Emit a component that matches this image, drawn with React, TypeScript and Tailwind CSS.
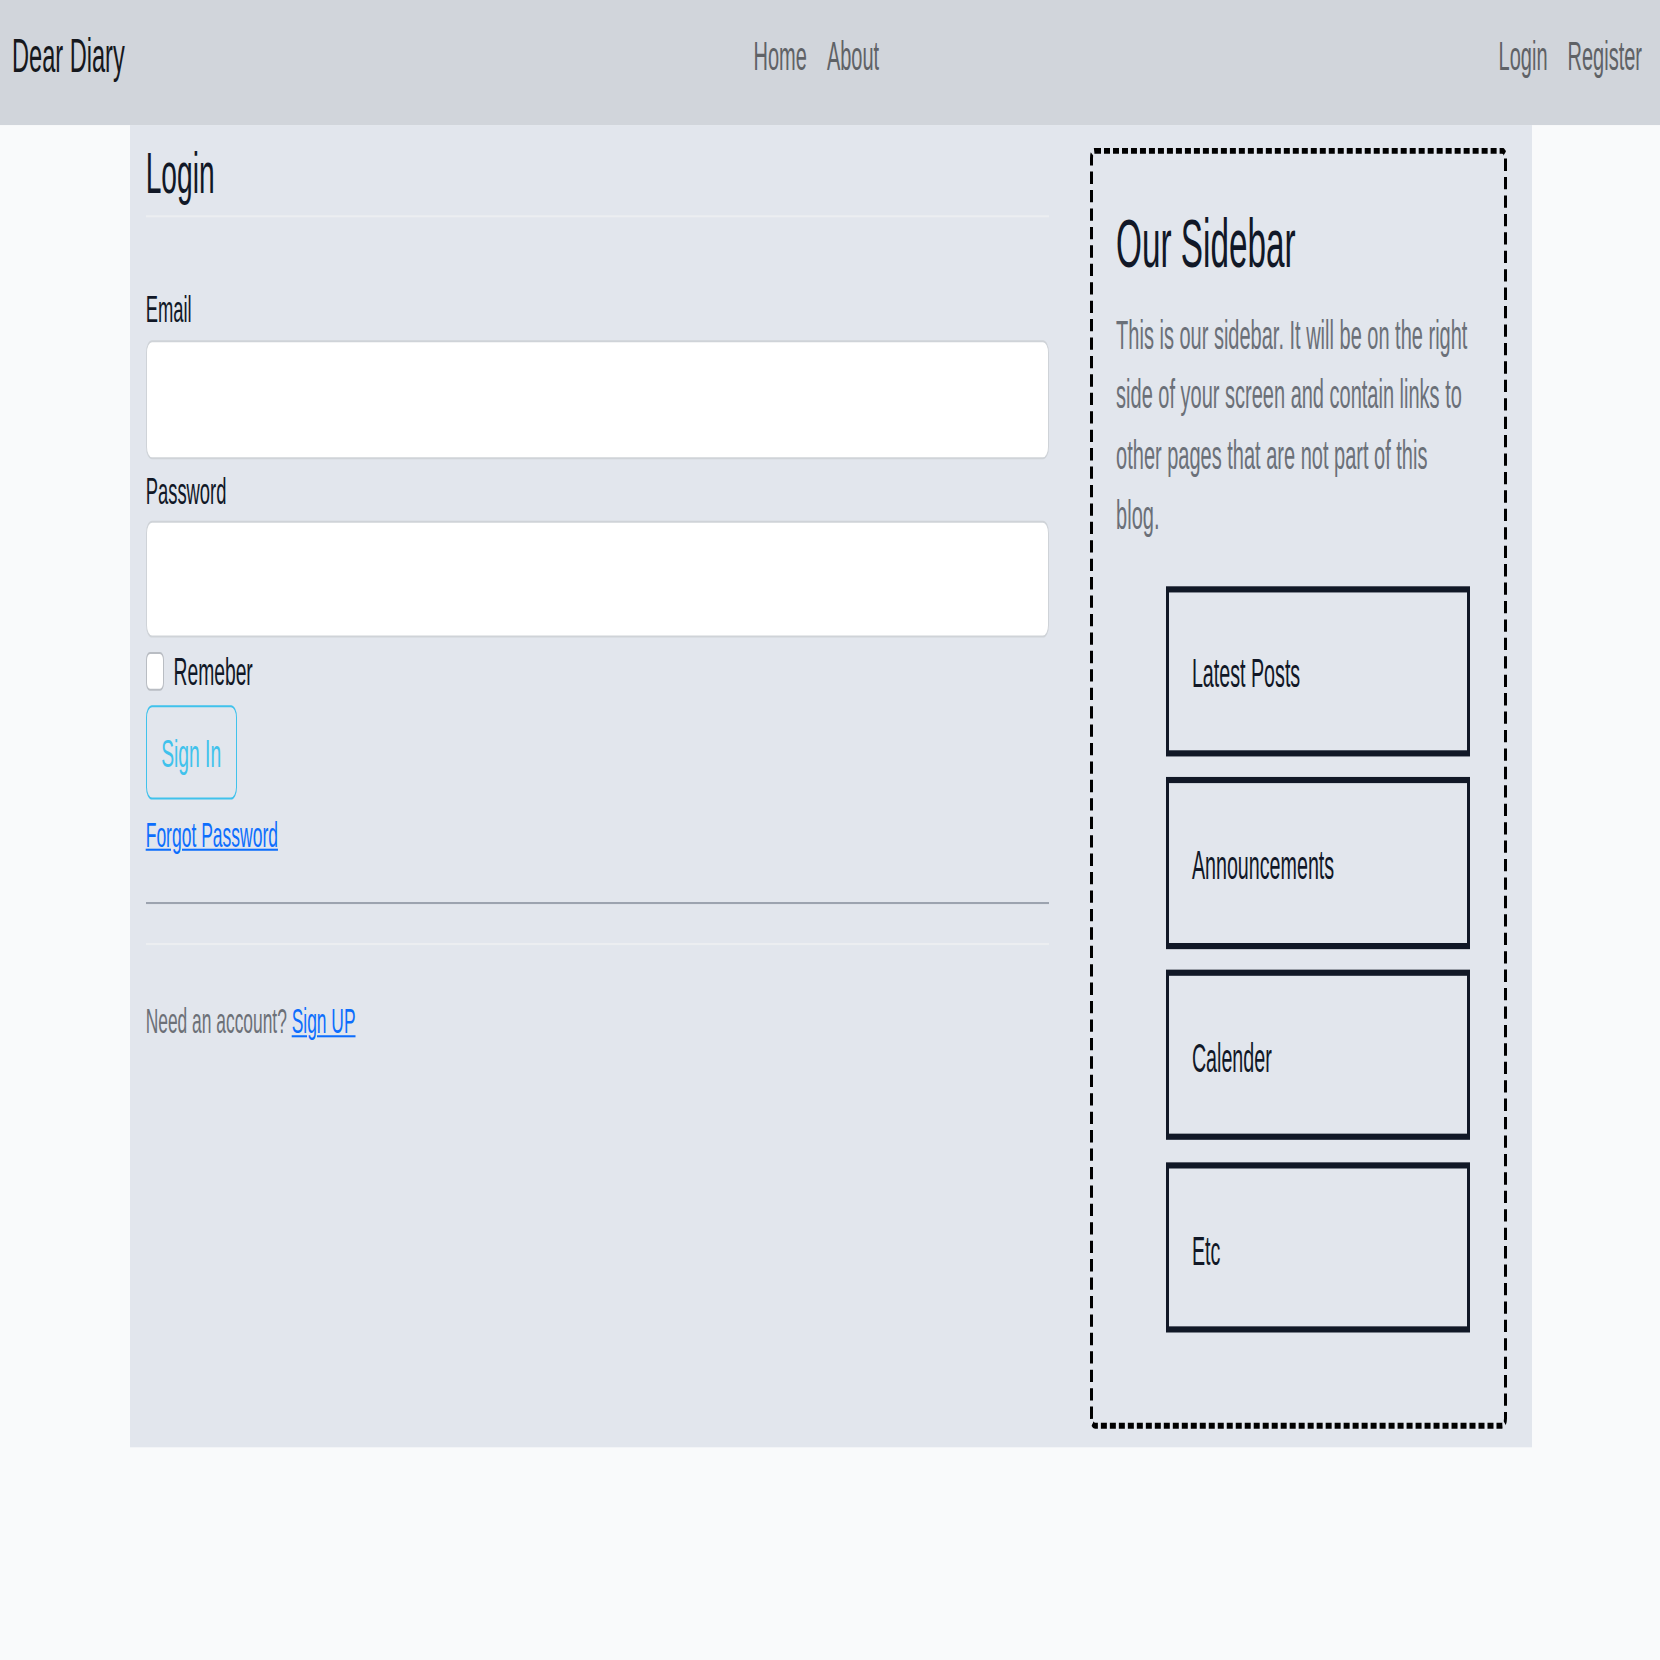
const navLinks = ["Home", "About"];
const authLinks = ["Login", "Register"];
const sidebarLinks = ["Latest Posts", "Announcements", "Calender", "Etc"];

export default function App() {
  return (
    <div className="h-[1660px] w-[1660px] overflow-hidden bg-[#f9fafb] font-['Liberation_Sans',Arial,sans-serif]">
      {/* the reference shot is stretched ~2.05x vertically, so the page is too */}
      <div className="w-[1660px] origin-top-left scale-y-[2.05]">
        <nav className="flex h-[61px] items-center bg-[#d1d5db] pb-[6.4px] pl-[12px] pr-[8px]">
          <a className="mr-[19.4px] text-[23.6px] leading-[1.5] text-[#16181d]">
            Dear Diary
          </a>
          <ul className="mx-auto flex">
            {navLinks.map((link) => (
              <li key={link}>
                <a className="block px-[10px] text-[20px] leading-[1.5] text-[#5f6266]">
                  {link}
                </a>
              </li>
            ))}
          </ul>
          <ul className="flex">
            {authLinks.map((link) => (
              <li key={link}>
                <a className="block px-[10px] text-[20px] leading-[1.5] text-[#5f6266]">
                  {link}
                </a>
              </li>
            ))}
          </ul>
        </nav>

        <main className="ml-[130px] flex w-[1402px] bg-[#e2e6ed]">
          <section className="w-[919px] pl-[15.7px] pt-[6.6px]">
            <div className="border-b border-[#eceef1] pb-[4px]">
              <h2 className="text-[28.2px] leading-[1.2] text-[#111827]">Login</h2>
            </div>

            <form>
              <label className="mt-[31px] block text-[18.4px] leading-[1.5] text-[#111827]">
                Email
              </label>
              <input
                type="email"
                className="mt-[0.8px] block h-[57.7px] w-full rounded-[6px] border border-[#cfd3d8] bg-white"
              />
              <label className="mt-[2.5px] block text-[18.4px] leading-[1.5] text-[#111827]">
                Password
              </label>
              <input
                type="password"
                className="mt-[0.8px] block h-[56.9px] w-full rounded-[6px] border border-[#cfd3d8] bg-white"
              />
              <div className="mt-[1.5px] flex items-start">
                <input
                  type="checkbox"
                  className="mt-[4.7px] h-[19px] w-[18.3px] appearance-none rounded-[4px] border border-[#b9bdc3] bg-white"
                />
                <span className="ml-[9.5px] mt-[1px] text-[19.3px] leading-[1.5] text-[#111827]">
                  Remeber
                </span>
              </div>
              <button
                type="button"
                className="mt-[1.55px] flex h-[45.8px] w-[91px] items-center justify-center rounded-[6px] border border-[#40c2ec] pt-[3px] text-[19.3px] leading-[1.5] text-[#40c2ec]"
              >
                Sign In
              </button>
              <a className="mt-[3.6px] block w-fit text-[17.5px] leading-[1.5] text-[#0d6efd] underline">
                Forgot Password
              </a>
            </form>

            <hr className="mt-[19.55px] border-[#9ca3af]" />
            <hr className="mt-[19.9px] border-[#eceef1]" />

            <p className="mt-[23.6px] text-[17.4px] leading-[1.5] text-[#6c7077]">
              Need an account?{" "}
              <a className="text-[#0d6efd] underline">Sign UP</a>
            </p>
          </section>

          <aside className="mb-[9.6px] ml-[40.6px] mt-[10.6px] w-[417.6px] rounded-[5px] border-[3px] border-dashed border-black pb-[43.6px] pl-[23.5px] pt-[24.8px]">
            <h2 className="text-[33.3px] leading-[1.2] text-[#111827]">Our Sidebar</h2>
            <p className="mt-[9.3px] w-[356px] text-[20px] leading-[29.5px] text-[#6b7078]">
              This is our sidebar. It will be on the right side of your screen and
              contain links to other pages that are not part of this blog.
            </p>
            <ul className="mt-[18.9px] flex flex-col gap-[10.3px]">
              {sidebarLinks.map((link) => (
                <li
                  key={link}
                  className="ml-[49.9px] flex h-[83.4px] w-[304.5px] items-center border-[3px] border-[#111827] pl-[22.9px] pt-[4px]"
                >
                  <span className="text-[19.7px] leading-[1.5] text-[#111827]">{link}</span>
                </li>
              ))}
            </ul>
          </aside>
        </main>
      </div>
    </div>
  );
}
